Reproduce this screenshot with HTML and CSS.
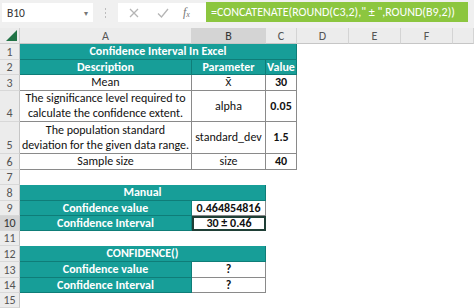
FILE: index.html
```html
<!DOCTYPE html>
<html>
<head>
<meta charset="utf-8">
<link rel="stylesheet" href="styles.css">
</head>
<body>
<div class="app">
  <div class="fbar">
    <div class="namebox"><span class="ref">B10</span><span class="dd">&#9662;</span></div>
    <div class="sep"><i></i><i></i><i></i></div>
    <div class="icons">
      <svg class="ic" width="10" height="10" viewBox="0 0 10 10"><path d="M1 1L9 9M9 1L1 9" stroke="#b5b5b5" stroke-width="1.3" fill="none"/></svg>
      <svg class="ic" width="12" height="10" viewBox="0 0 12 10"><path d="M1 5.5L4.5 9L11 1" stroke="#b5b5b5" stroke-width="1.3" fill="none"/></svg>
      <span class="fx">f<sub>x</sub></span>
    </div>
    <div class="formula">=CONCATENATE(ROUND(C3,2)," ± ",ROUND(B9,2))</div>
  </div>
  <div class="sheet">
    <div class="corner"><span class="tri"></span></div>
    <div class="ch">A</div>
    <div class="ch sel">B</div>
    <div class="ch">C</div>
    <div class="ch">D</div>
    <div class="ch">E</div>
    <div class="ch">F</div>
    <div class="ch"></div>

    <div class="rn">1</div>
    <div class="c t span3">Confidence Interval In Excel</div>
    <div class="rest"></div>

    <div class="rn">2</div>
    <div class="c t">Description</div>
    <div class="c t">Parameter</div>
    <div class="c t">Value</div>
    <div class="rest"></div>

    <div class="rn">3</div>
    <div class="c w">Mean</div>
    <div class="c w">x&#772;</div>
    <div class="c w b">30</div>
    <div class="rest"></div>

    <div class="rn low">4</div>
    <div class="c w">The significance level required to<br>calculate the confidence extent.</div>
    <div class="c w">alpha</div>
    <div class="c w b">0.05</div>
    <div class="rest"></div>

    <div class="rn low">5</div>
    <div class="c w">The population standard<br>deviation for the given data range.</div>
    <div class="c w">standard_dev</div>
    <div class="c w b">1.5</div>
    <div class="rest"></div>

    <div class="rn">6</div>
    <div class="c w">Sample size</div>
    <div class="c w">size</div>
    <div class="c w b">40</div>
    <div class="rest"></div>

    <div class="rn">7</div>
    <div class="rest7"></div>

    <div class="rn">8</div>
    <div class="c t span2">Manual</div>
    <div class="rest5"></div>

    <div class="rn">9</div>
    <div class="c t">Confidence value</div>
    <div class="c w b">0.464854816</div>
    <div class="rest5"></div>

    <div class="rn selr">10</div>
    <div class="c t">Confidence Interval</div>
    <div class="c w b active">30 ± 0.46</div>
    <div class="rest5"></div>

    <div class="rn">11</div>
    <div class="rest7"></div>

    <div class="rn">12</div>
    <div class="c t span2">CONFIDENCE()</div>
    <div class="rest5"></div>

    <div class="rn">13</div>
    <div class="c t">Confidence value</div>
    <div class="c w b">?</div>
    <div class="rest5"></div>

    <div class="rn">14</div>
    <div class="c t">Confidence Interval</div>
    <div class="c w b">?</div>
    <div class="rest5"></div>

    <div class="rn">15</div>
    <div class="rest7"></div>
  </div>
</div>
</body>
</html>
```
FILE: styles.css
```css
* { box-sizing: border-box; }
html, body { margin: 0; padding: 0; background: #fff; }
body { width: 474px; height: 308px; overflow: hidden; font-family: Carlito, "Open Sans", sans-serif; }
.app { display: flex; flex-direction: column; }

.fbar {
  height: 28px;
  background: #f0f0f0;
  display: flex;
  align-items: flex-start;
  padding: 3px 6px 0 2px;
}
.namebox {
  width: 91px; height: 19px;
  background: #fff;
  display: flex; align-items: center; justify-content: space-between;
  padding: 0 5px 0 5px;
}
.ref { font-size: 11.5px; color: #333; }
.dd { font-size: 8px; color: #777; }
.sep { width: 25px; height: 19px; display: flex; flex-direction: column; align-items: center; justify-content: center; gap: 2px; }
.sep i { display: block; width: 1px; height: 2px; background: #bdbdbd; }
.icons {
  width: 88px; height: 19px; background: #fff;
  display: flex; align-items: center; gap: 0;
  padding-left: 11px;
}
.ic { margin-right: 18px; }
.icons .ic + .ic { margin-right: 14px; }
.fx { font-family: "Liberation Serif", serif; font-style: italic; font-size: 12px; color: #777; }
.fx sub { font-size: 8px; vertical-align: -1px; }
.formula {
  flex: 1; height: 20px; margin-top: -1px;
  background: #8cc63f; color: #fff;
  font-size: 12px;
  display: flex; align-items: center;
  padding-left: 5px;
  white-space: nowrap;
}

.sheet {
  display: grid;
  grid-template-columns: 20px 172px 74px 31px 52px 52px 52px 1fr;
  grid-template-rows: 16px 16px 15px 16px 31px 32px 16px 15px 16px 15px 15px 15px 16px 16px 15px 15px;
  font-size: 12px;
}
.corner { background: #ececec; border-right: 1px solid #d0d0d0; border-bottom: 1px solid #d0d0d0; position: relative; }
.tri { position: absolute; right: 2px; bottom: 2px; width: 0; height: 0; border-left: 11px solid transparent; border-bottom: 11px solid #217346; }
.ch {
  background: #ececec; color: #555;
  border-right: 1px solid #d4d4d4; border-bottom: 1px solid #c6c6c6;
  display: flex; align-items: center; justify-content: center;
  font-size: 12px;
}
.ch.sel { background: #d4d4d4; color: #333; }
.rn {
  background: #ececec; color: #555;
  border-right: 1px solid #c6c6c6; border-bottom: 1px solid #d8d8d8;
  display: flex; align-items: center; justify-content: center;
  font-size: 12px;
}
.rn.low { align-items: flex-end; padding-bottom: 1px; }
.rn.selr { background: #d4d4d4; color: #333; }
.c {
  display: flex; align-items: center; justify-content: center;
  text-align: center; line-height: 15px;
  white-space: nowrap;
}
.t { background: #179e98; color: #fff; font-weight: bold; border-right: 1px solid #0f7d78; border-bottom: 1px solid #0f7d78; }
.w { background: #fff; color: #111; border-right: 1px solid #8a8a8a; border-bottom: 1px solid #8a8a8a; }
.b { font-weight: bold; }
.active { border: 2px solid #1f3f36; }
.span3 { grid-column: span 3; }
.span2 { grid-column: span 2; }
.rest { grid-column: span 4; }
.rest5 { grid-column: span 5; }
.rest7 { grid-column: span 7; }
```
